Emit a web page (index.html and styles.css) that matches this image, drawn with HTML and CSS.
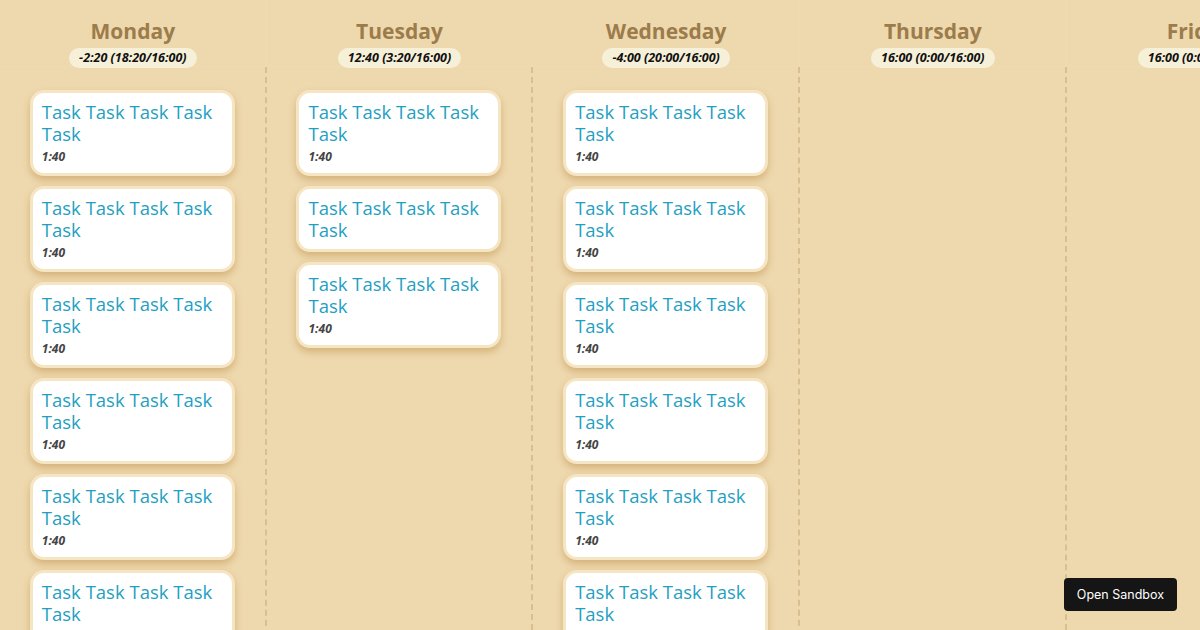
FILE: index.html
```html
<!DOCTYPE html>
<html lang="en">
<head>
  <meta charset="UTF-8">
  <meta name="viewport" content="width=device-width, initial-scale=1.0">
  <title>Week Planner</title>
  <link rel="stylesheet" href="styles.css">
</head>
<body>
  <div id="week">
    <div class="day">
      <div class="day-head">
        <h2>Monday</h2>
        <span class="total">-2:20 (18:20/16:00)</span>
      </div>
      <div class="tasks">
        <div class="task"><div class="name">Task Task Task Task Task</div><div class="time">1:40</div></div>
        <div class="task"><div class="name">Task Task Task Task Task</div><div class="time">1:40</div></div>
        <div class="task"><div class="name">Task Task Task Task Task</div><div class="time">1:40</div></div>
        <div class="task"><div class="name">Task Task Task Task Task</div><div class="time">1:40</div></div>
        <div class="task"><div class="name">Task Task Task Task Task</div><div class="time">1:40</div></div>
        <div class="task"><div class="name">Task Task Task Task Task</div><div class="time">1:40</div></div>
      </div>
    </div>

    <div class="day">
      <div class="day-head">
        <h2>Tuesday</h2>
        <span class="total">12:40 (3:20/16:00)</span>
      </div>
      <div class="tasks">
        <div class="task"><div class="name">Task Task Task Task Task</div><div class="time">1:40</div></div>
        <div class="task"><div class="name">Task Task Task Task Task</div></div>
        <div class="task"><div class="name">Task Task Task Task Task</div><div class="time">1:40</div></div>
      </div>
    </div>

    <div class="day">
      <div class="day-head">
        <h2>Wednesday</h2>
        <span class="total">-4:00 (20:00/16:00)</span>
      </div>
      <div class="tasks">
        <div class="task"><div class="name">Task Task Task Task Task</div><div class="time">1:40</div></div>
        <div class="task"><div class="name">Task Task Task Task Task</div><div class="time">1:40</div></div>
        <div class="task"><div class="name">Task Task Task Task Task</div><div class="time">1:40</div></div>
        <div class="task"><div class="name">Task Task Task Task Task</div><div class="time">1:40</div></div>
        <div class="task"><div class="name">Task Task Task Task Task</div><div class="time">1:40</div></div>
        <div class="task"><div class="name">Task Task Task Task Task</div><div class="time">1:40</div></div>
      </div>
    </div>

    <div class="day">
      <div class="day-head">
        <h2>Thursday</h2>
        <span class="total">16:00 (0:00/16:00)</span>
      </div>
      <div class="tasks"></div>
    </div>

    <div class="day">
      <div class="day-head">
        <h2>Friday</h2>
        <span class="total">16:00 (0:00/16:00)</span>
      </div>
      <div class="tasks"></div>
    </div>
  </div>

  <a class="sandbox" href="#">Open Sandbox</a>
</body>
</html>
```

FILE: styles.css
```css
:root {
  --bg: #eed8ae;
  --head: #9b7c4a;
  --task: #1f9fc2;
  --col: 266.67px;
}

body {
  margin: 0;
  padding: 0;
  background: var(--bg);
  font-family: "Open Sans", "Noto Sans", sans-serif;
  height: 630px;
  overflow: hidden;
}

#week {
  display: flex;
  height: 100%;
}

.day {
  flex: 0 0 var(--col);
  box-sizing: border-box;
  display: flex;
  flex-direction: column;
}

.day-head {
  display: flex;
  flex-direction: column;
  align-items: center;
  height: 67px;
  border-bottom: 1px solid rgba(255, 255, 255, .07);
  border-right: 1px solid rgba(255, 255, 255, .07);
  box-sizing: border-box;
}

.day-head h2 {
  margin: 17px 0 0;
  font-size: 21px;
  line-height: 28px;
  font-weight: 700;
  color: var(--head);
  white-space: nowrap;
}

.total {
  margin-top: 3px;
  padding: 0 10px;
  background: #f7f0d8;
  border-radius: 10px;
  font-size: 12.5px;
  line-height: 20px;
  font-weight: 700;
  font-style: italic;
  color: #111;
  white-space: nowrap;
}

.tasks {
  flex: 1;
  display: flex;
  flex-direction: column;
  align-items: center;
  gap: 10px;
  padding-top: 23px;
  border-right: 2px dashed #d9bf8f;
}

.task {
  width: 205px;
  box-sizing: border-box;
  flex: none;
  background: #fff;
  border: 3px solid #f6e5c3;
  border-radius: 14px;
  padding: 8px 9px;
  box-shadow: 0 4px 7px rgba(175, 125, 45, .4);
}

.name {
  font-size: 18.5px;
  line-height: 22px;
  color: var(--task);
}

.time {
  margin-top: 4px;
  font-size: 12px;
  line-height: 16px;
  font-weight: 700;
  font-style: italic;
  color: #444;
}

.sandbox {
  position: fixed;
  right: 23px;
  bottom: 19px;
  padding: 0 13px;
  height: 33px;
  line-height: 33px;
  background: #151515;
  border-radius: 4px;
  color: #fff;
  font-family: Inter, "Liberation Sans", sans-serif;
  font-size: 12.5px;
  text-decoration: none;
}
```
